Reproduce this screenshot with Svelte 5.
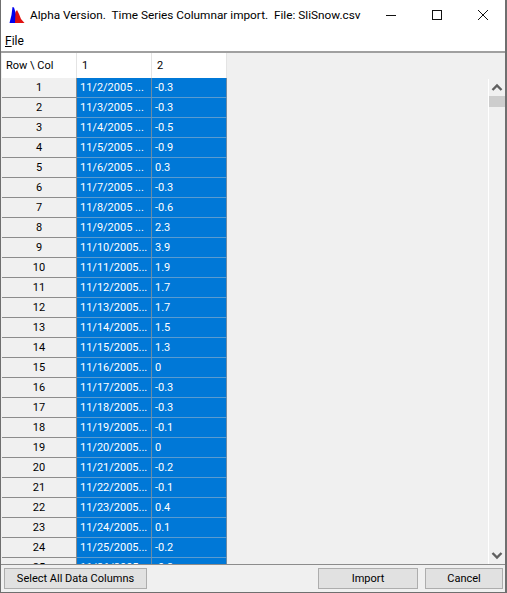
<script lang="ts">
	const dates = [
		'11/2/2005 ...', '11/3/2005 ...', '11/4/2005 ...', '11/5/2005 ...', '11/6/2005 ...',
		'11/7/2005 ...', '11/8/2005 ...', '11/9/2005 ...', '11/10/2005...', '11/11/2005...',
		'11/12/2005...', '11/13/2005...', '11/14/2005...', '11/15/2005...', '11/16/2005...',
		'11/17/2005...', '11/18/2005...', '11/19/2005...', '11/20/2005...', '11/21/2005...',
		'11/22/2005...', '11/23/2005...', '11/24/2005...', '11/25/2005...', '11/26/2005...'
	];
	const values = [
		'-0.3', '-0.3', '-0.5', '-0.9', '0.3', '-0.3', '-0.6', '2.3', '3.9', '1.9', '1.7', '1.7',
		'1.5', '1.3', '0', '-0.3', '-0.3', '-0.1', '0', '-0.2', '-0.1', '0.4', '0.1', '-0.2', '-0.3'
	];
</script>

<div class="window">
	<header class="titlebar">
		<svg class="logo" width="16" height="16" viewBox="0 0 16 16">
			<path d="M0.5 16 L2.5 8 L3.5 0 L5 0.5 L7 7 L9 16 Z" fill="#0000f0" />
			<path d="M6 16 L6.5 5 L8 3 L10 7 L12 12 L15.5 16 Z" fill="#e01010" />
		</svg>
		<span class="title">Alpha Version.&nbsp; Time Series Columnar import.&nbsp; File: SliSnow.csv</span>
		<div class="controls">
			<svg width="46" height="30" viewBox="0 0 46 30"><path d="M18 15.5 H28" stroke="#111" /></svg>
			<svg width="46" height="30" viewBox="0 0 46 30"><rect x="18.5" y="10.5" width="9" height="9" fill="none" stroke="#111" /></svg>
			<svg width="46" height="30" viewBox="0 0 46 30"><path d="M18 10 L28 20 M28 10 L18 20" stroke="#111" /></svg>
		</div>
	</header>

	<nav class="menubar"><span><u>F</u>ile</span></nav>

	<main class="content">
		<div class="grid">
			<div class="corner">Row \ Col</div>
			<div class="colhead">1</div>
			<div class="colhead">2</div>
			{#each dates as date, i}
				<div class="rowhead">{i + 1}</div>
				<div class="cell">{date}</div>
				<div class="cell">{values[i]}</div>
			{/each}
		</div>

		<div class="scrollbar">
			<svg width="16" height="17" viewBox="0 0 16 17"><path d="M3.5 11 L8 6.5 L12.5 11" fill="none" stroke="#606060" stroke-width="2.4" /></svg>
			<div class="thumb"></div>
			<svg class="down" width="16" height="17" viewBox="0 0 16 17"><path d="M3.5 6 L8 10.5 L12.5 6" fill="none" stroke="#606060" stroke-width="2.4" /></svg>
		</div>
	</main>

	<footer class="actions">
		<button class="select-all">Select All Data Columns</button>
		<button class="import">Import</button>
		<button class="cancel">Cancel</button>
	</footer>
</div>

<style>
	:global(body) {
		margin: 0;
		background: #f0f0f0;
	}

	.window {
		box-sizing: border-box;
		width: 507px;
		height: 593px;
		display: flex;
		flex-direction: column;
		border-left: 1px solid #6f6f6f;
		border-right: 2px solid #6f6f6f;
		border-bottom: 1px solid #6f6f6f;
		font-family: Roboto, 'Noto Sans', sans-serif;
		font-size: 12px;
		color: #000;
		background: #f0f0f0;
		overflow: hidden;
	}

	.titlebar {
		height: 30px;
		flex: none;
		display: flex;
		align-items: center;
		background: #fff;
		padding-left: 8px;
	}

	.logo {
		flex: none;
		margin-right: 5px;
	}

	.title {
		white-space: nowrap;
		flex: 1;
		font-size: 11.8px;
	}

	.controls {
		display: flex;
		flex: none;
		margin-right: -1px;
	}

	.menubar {
		height: 21px;
		flex: none;
		background: #fff;
		padding-left: 4px;
		display: flex;
		align-items: center;
		border-bottom: 2px solid #a0a0a0;
	}

	.content {
		flex: 1;
		min-height: 0;
		display: flex;
		justify-content: space-between;
		overflow: hidden;
		background: #f0f0f0;
	}

	.grid {
		display: grid;
		grid-template-columns: 75px 75px 75px;
		grid-auto-rows: 20px;
		grid-template-rows: 25px;
		margin-left: 1px;
		align-self: flex-start;
		font-size: 11px;
	}

	.corner,
	.colhead {
		background: #fff;
		display: flex;
		align-items: center;
		padding-left: 4px;
		border-right: 1px solid #e4e4e4;
	}

	.colhead {
		padding-left: 5px;
	}

	.rowhead {
		background: #f0f0f0;
		display: flex;
		align-items: center;
		justify-content: center;
		box-sizing: border-box;
		border-bottom: 1px solid #8c8c8c;
		border-right: 1px solid #8c8c8c;
	}

	.cell {
		background: #0078d7;
		color: #fff;
		display: flex;
		align-items: center;
		padding-left: 3px;
		box-sizing: border-box;
		white-space: nowrap;
		border-bottom: 1px solid #5a9bd0;
		border-right: 1px solid #6c8aa3;
	}

	.scrollbar {
		box-sizing: border-box;
		width: 17px;
		margin-top: 26px;
		display: flex;
		flex-direction: column;
		border-left: 1px solid #fff;
		background: #f0f0f0;
	}

	.scrollbar svg {
		flex: none;
	}

	.thumb {
		height: 11px;
		background: #cdcdcd;
	}

	.down {
		margin-top: auto;
	}

	.actions {
		height: 28px;
		flex: none;
		box-sizing: border-box;
		display: flex;
		align-items: flex-start;
		padding: 3px 2px 0 3px;
		border-top: 1px solid #8c8c8c;
		background: #f0f0f0;
	}

	button {
		height: 21px;
		box-sizing: border-box;
		padding: 0;
		font: inherit;
		font-size: 11px;
		color: #000;
		background: #e1e1e1;
		border: 1px solid #adadad;
	}

	.select-all {
		width: 143px;
	}

	.import {
		width: 100px;
		margin-left: auto;
	}

	.cancel {
		width: 78px;
		margin-left: 7px;
	}
</style>
